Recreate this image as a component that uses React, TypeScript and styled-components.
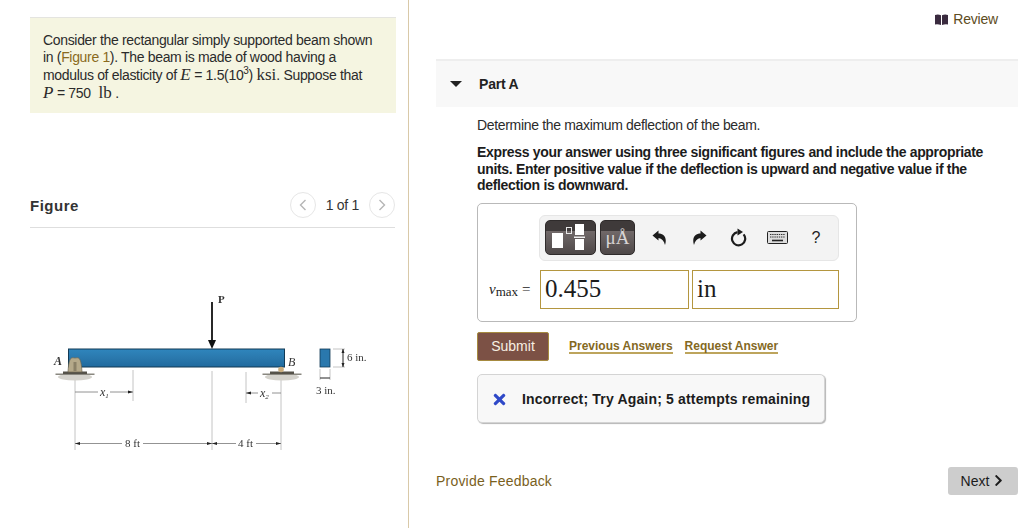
import React from 'react';
import styled, { createGlobalStyle } from 'styled-components';
import { FaChevronRight, FaTimes } from 'react-icons/fa';

const GlobalStyle = createGlobalStyle`
  html, body {
    margin: 0;
    padding: 0;
    background: #fff;
    font-family: "Liberation Sans", Arial, sans-serif;
    font-size: 14px;
    color: #222;
  }
`;

const Page = styled.div`
  display: flex;
  width: 1024px;
  height: 528px;
  overflow: hidden;
`;

const LeftColumn = styled.div`
  width: 409px;
  height: 528px;
  box-sizing: border-box;
  flex: none;
  padding: 17px 12px 0 30px;
  border-right: 1px solid #d9c9a8;
`;

const ProblemBox = styled.div`
  height: 96px;
  box-sizing: border-box;
  padding: 14px 13px 0;
  background: #f5f5e1;
  border-top: 1px solid #e4e4e0;
  line-height: 17px;
  letter-spacing: -0.33px;
  color: #2b2b2b;
`;

const Sup = styled.sup`
  font-size: 10px;
  line-height: 0;
`;

const MathText = styled.span<{ $italic?: boolean }>`
  font-family: "Liberation Serif", "Times New Roman", serif;
  font-size: 17px;
  letter-spacing: 0;
  font-style: ${(p) => (p.$italic ? 'italic' : 'normal')};
`;

const InlineLink = styled.span`
  color: #8a6a1d;
`;

const FigureHeader = styled.div`
  display: flex;
  align-items: center;
  justify-content: space-between;
  height: 26px;
  margin-top: 79px;
  margin-right: 1px;
  padding-bottom: 9px;
  border-bottom: 1px solid #dedede;
`;

const FigureTitle = styled.span`
  font-size: 15px;
  font-weight: bold;
  letter-spacing: 0.5px;
  color: #333;
`;

const Pager = styled.div`
  display: flex;
  align-items: center;
  gap: 10px;
  letter-spacing: -0.3px;
  color: #333;
`;

const PagerButton = styled.span`
  display: flex;
  align-items: center;
  justify-content: center;
  width: 26px;
  height: 26px;
  box-sizing: border-box;
  border: 1px solid #e6e6e6;
  border-radius: 50%;
`;

const Diagram = styled.svg`
  display: block;
  margin: 62px 0 0 10px;
  filter: blur(0.4px);
`;

const RightColumn = styled.div`
  flex: 1;
  display: flex;
  flex-direction: column;
  padding: 0 6px 0 27px;
`;

const ReviewRow = styled.div`
  display: flex;
  align-items: center;
  justify-content: flex-end;
  gap: 5px;
  height: 38px;
  margin: 0 20px 21px 0;
  letter-spacing: -0.2px;
  color: #5d4c22;
`;

const PartBar = styled.div`
  display: flex;
  align-items: center;
  height: 48px;
  box-sizing: border-box;
  padding-left: 14px;
  gap: 17px;
  background: #f8f8f8;
  border-top: 2px solid #eeeeee;
  font-weight: bold;
  letter-spacing: -0.2px;
  color: #222;
`;

const Caret = styled.span`
  width: 0;
  height: 0;
  border-left: 6px solid transparent;
  border-right: 6px solid transparent;
  border-top: 6px solid #222;
`;

const PartBody = styled.div`
  padding-left: 41px;
`;

const Prompt = styled.p`
  margin: 10px 0 0;
  line-height: 17px;
  letter-spacing: -0.33px;
  color: #2b2b2b;
`;

const Instructions = styled.p`
  margin: 10px 0 0;
  width: 510px;
  line-height: 16.5px;
  font-weight: bold;
  letter-spacing: -0.33px;
  color: #1c1c1c;
`;

const AnswerBox = styled.div`
  display: grid;
  grid-template-columns: 50px 300px;
  row-gap: 9px;
  align-items: center;
  align-content: start;
  width: 380px;
  height: 119px;
  box-sizing: border-box;
  margin-top: 9px;
  padding: 11px 0 0 11px;
  border: 1px solid #b9b9b9;
  border-radius: 5px;
`;

const Toolbar = styled.div`
  grid-column: 2;
  display: flex;
  align-items: center;
  width: 300px;
  height: 46px;
  box-sizing: border-box;
  padding-left: 5px;
  background: #f3f3f3;
  border: 1px solid #e6e6e6;
  border-radius: 6px;
`;

const TemplateButton = styled.div<{ $width: number }>`
  display: flex;
  align-items: center;
  justify-content: center;
  width: ${(p) => p.$width}px;
  height: 35px;
  margin-right: 4px;
  border-radius: 5px;
  background: linear-gradient(#3f3a3a 0 30%, #716969 30%, #4e4848 100%);
  border: 1px solid #2f2b2b;
  box-sizing: border-box;
  color: #d8d4d4;
  font-family: "Liberation Serif", serif;
  font-size: 19px;
`;

const ToolIcon = styled.span<{ $width: number }>`
  display: flex;
  align-items: center;
  justify-content: center;
  width: ${(p) => p.$width}px;
  color: #222;
  font-size: 16px;
`;

const Label = styled.span`
  font-family: "Liberation Serif", serif;
  font-size: 15px;
  color: #222;
  white-space: nowrap;
`;

const LabelSub = styled.span`
  font-size: 13px;
  position: relative;
  top: 2px;
  margin-right: 4px;
`;

const InputRow = styled.div`
  display: flex;
  gap: 3px;
  margin-left: 1px;
`;

const InputCell = styled.div<{ $width: number }>`
  width: ${(p) => p.$width}px;
  height: 39px;
  box-sizing: border-box;
  padding-left: 4px;
  border: 1px solid #b4963f;
  font-family: "Liberation Serif", serif;
  font-size: 25px;
  line-height: 36px;
  color: #1c1c1c;
`;

const ActionRow = styled.div`
  display: flex;
  align-items: center;
  margin-top: 10px;
`;

const SubmitButton = styled.div`
  display: flex;
  align-items: center;
  justify-content: center;
  width: 72px;
  height: 29px;
  box-sizing: border-box;
  background: #7c5145;
  border: 1px solid #a68a3f;
  border-radius: 2px;
  color: #f7efe2;
  margin-right: 20px;
`;

const ActionLink = styled.span`
  margin: 2px 12px 0 0;
  font-size: 12px;
  font-weight: bold;
  color: #84691f;
  border-bottom: 2px solid #bda45c;
  line-height: 12px;
`;

const FeedbackBox = styled.div`
  display: flex;
  align-items: center;
  gap: 14px;
  width: 348px;
  height: 49px;
  box-sizing: border-box;
  margin-top: 13px;
  padding: 2px 0 0 13px;
  background: #f8f8f8;
  border: 1px solid #d4d4d4;
  border-radius: 5px;
  box-shadow: 1px 1px 1px #b5b5b5;
  font-weight: bold;
  color: #1c1c1c;
  font-size: 14px;
  letter-spacing: 0.17px;
`;

const FooterRow = styled.div`
  display: flex;
  align-items: center;
  justify-content: space-between;
  margin-top: 44px;
`;

const FooterLink = styled.span`
  color: #7a5f1d;
  letter-spacing: 0.2px;
`;

const NextButton = styled.div`
  display: flex;
  align-items: center;
  justify-content: center;
  gap: 3px;
  width: 70px;
  height: 28px;
  background: #cdcdcd;
  border-radius: 3px;
  color: #1c1c1c;
`;

const BookIcon = () => (
  <svg width="13" height="11" viewBox="0 0 13 11">
    <path d="M0 1 Q3 0 6 1.2 V11 Q3 9.8 0 10.4 Z M7 1.2 Q10 0 13 1 V10.4 Q10 9.8 7 11 Z" fill="#3a2b3f" />
  </svg>
);

const ChevronGlyph = ({ back }: { back?: boolean }) => (
  <svg width="8" height="12" viewBox="0 0 8 12">
    <path d={back ? 'M6.5 1 L1.5 6 L6.5 11' : 'M1.5 1 L6.5 6 L1.5 11'} fill="none" stroke="#b5b5b5" strokeWidth="1.4" />
  </svg>
);

const FractionGlyph = () => (
  <svg width="49" height="33" viewBox="1 1 49 33">
    <rect x="7" y="13" width="11" height="15" fill="#fff" />
    <rect x="21.5" y="7.5" width="5" height="6" fill="none" stroke="#e8e8e8" strokeWidth="1" />
    <rect x="30" y="4" width="9" height="11" fill="#fff" />
    <rect x="29" y="16.5" width="11" height="1.5" fill="#eee" />
    <rect x="30" y="19" width="9" height="11" fill="#fff" />
  </svg>
);

const ArrowGlyph = ({ flip }: { flip?: boolean }) => (
  <svg width="15" height="16" viewBox="0 0 15 16">
    <path
      transform={flip ? 'translate(15 0) scale(-1 1)' : undefined}
      d="M0.5 5.5 L6.5 0.5 V3.5 C11.5 3.5 15.5 7.5 13 15 C12 11 10 8.5 6.5 8 V10.5 Z"
      fill="#1c1c1c"
    />
  </svg>
);

const ResetGlyph = () => (
  <svg width="17" height="19" viewBox="0 0 17 19">
    <path d="M7.5 4.2 A6.6 6.6 0 1 0 13.6 6.4" fill="none" stroke="#1c1c1c" strokeWidth="2.2" />
    <path d="M7.5 0.5 L13 4 L7.5 7.5 Z" fill="#1c1c1c" />
  </svg>
);

const KeyboardGlyph = () => (
  <svg width="21" height="13" viewBox="0 0 21 13">
    <rect x="0.5" y="0.5" width="20" height="12" rx="1" fill="#ddd" stroke="#222" />
    <path d="M3 3.5h15M3 6h15" stroke="#333" strokeWidth="1.2" strokeDasharray="1.4 0.8" />
    <path d="M5 9.5h11" stroke="#222" strokeWidth="1.6" />
  </svg>
);

const Support = ({ x }: { x: number }) => (
  <g>
    <ellipse cx={x} cy={377} rx={17} ry={3.5} fill="#d4d2cc" />
    <rect x={x - 19.5} y={373.5} width={39} height={1.5} fill="#8a8880" />
    <rect x={x - 12} y={371.5} width={24} height={2.5} fill="#55524a" />
  </g>
);

const BeamDiagram = () => (
  <Diagram width="340" height="170" viewBox="40 290 340 170">
    <defs>
      <linearGradient id="wood" x1="0" y1="0" x2="0" y2="1">
        <stop offset="0" stopColor="#2f86bd" />
        <stop offset="0.5" stopColor="#2a78ad" />
        <stop offset="1" stopColor="#1f6a9e" />
      </linearGradient>
    </defs>
    <g stroke="#c4c4c4" strokeWidth="1" fill="none">
      <path d="M75 376V450M133 370V401M212 371V450M246 372V403M281 376V450" />
      <path d="M333 349H345M333 367H345M320 369V380M330 369V380" />
    </g>
    <g stroke="#777" strokeWidth="0.8" fill="none">
      <path d="M75 392H98M110 392H133M246 393H258M272 393H281" />
      <path d="M75 443.5H122M143 443.5H212M212 443.5H236M256 443.5H281" />
    </g>
    <g stroke="#222" strokeWidth="1" fill="none">
      <path d="M343 349V367M320 378H330" />
    </g>
    <g fill="#222">
      <path d="M133 392l-5-1.5v3zM246 393l5-1.5v3zM75 443.5l5-1.5v3zM212 443.5l-5-1.5v3zM212 443.5l5-1.5v3zM281 443.5l-5-1.5v3zM343 349l-1.5 4h3zM343 367l-1.5-4h3z" />
    </g>
    <rect x="68.5" y="349" width="216" height="18" fill="url(#wood)" stroke="#123a55" strokeWidth="1" />
    <rect x="320" y="349" width="10" height="18" fill="#2a78ad" stroke="#123a55" strokeWidth="0.8" />
    <path d="M212 302V344" stroke="#111" strokeWidth="1.8" />
    <path d="M208 340H216L212 349Z" fill="#111" />
    <Support x={75} />
    <Support x={282} />
    <path d="M68 372 C69 355 72 358 75 358 C78 358 81 355 82 372Z" fill="#b5a98a" stroke="#6d6550" strokeWidth="0.7" />
    <rect x="73.5" y="362" width="3" height="9" fill="#8b8168" />
    <circle cx="281" cy="369.5" r="2.8" fill="#c9ad7e" />
    <g fontFamily='"Liberation Serif", serif' fontSize="11" fill="#333">
      <text x="218" y="303" fontWeight="bold">P</text>
      <text x="54" y="365" fontStyle="italic" fontWeight="bold" fontSize="12">A</text>
      <text x="288" y="366" fontStyle="italic" fontSize="12">B</text>
      <text x="100" y="396" fontStyle="italic" fontSize="12">x<tspan fontSize="7" dy="2">1</tspan></text>
      <text x="260" y="397" fontStyle="italic" fontSize="12">x<tspan fontSize="7" dy="2">2</tspan></text>
      <text x="125" y="447">8 ft</text>
      <text x="238" y="447">4 ft</text>
      <text x="347" y="361">6 in.</text>
      <text x="316" y="394">3 in.</text>
    </g>
  </Diagram>
);

export default function App() {
  return (
    <Page>
      <GlobalStyle />
      <LeftColumn>
        <ProblemBox>
          Consider the rectangular simply supported beam shown
          <br />
          in (<InlineLink>Figure 1</InlineLink>). The beam is made of wood having a
          <br />
          modulus of elasticity of <MathText $italic>E</MathText> = 1.5(10<Sup>3</Sup>) <MathText>ksi</MathText>. Suppose that
          <br />
          <MathText $italic>P</MathText> = 750 <MathText>&nbsp;lb</MathText> .
        </ProblemBox>
        <FigureHeader>
          <FigureTitle>Figure</FigureTitle>
          <Pager>
            <PagerButton>
              <ChevronGlyph back />
            </PagerButton>
            <span>1 of 1</span>
            <PagerButton>
              <ChevronGlyph />
            </PagerButton>
          </Pager>
        </FigureHeader>
        <BeamDiagram />
      </LeftColumn>
      <RightColumn>
        <ReviewRow>
          <BookIcon />
          <span>Review</span>
        </ReviewRow>
        <PartBar>
          <Caret />
          <span>Part A</span>
        </PartBar>
        <PartBody>
          <Prompt>Determine the maximum deflection of the beam.</Prompt>
          <Instructions>
            Express your answer using three significant figures and include the appropriate units. Enter positive value if the deflection is upward and negative value if the deflection is downward.
          </Instructions>
          <AnswerBox>
            <Toolbar>
              <TemplateButton $width={51}>
                <FractionGlyph />
              </TemplateButton>
              <TemplateButton $width={35}>μÅ</TemplateButton>
              <ToolIcon $width={40}>
                <ArrowGlyph />
              </ToolIcon>
              <ToolIcon $width={40}>
                <ArrowGlyph flip />
              </ToolIcon>
              <ToolIcon $width={38}>
                <ResetGlyph />
              </ToolIcon>
              <ToolIcon $width={40}>
                <KeyboardGlyph />
              </ToolIcon>
              <ToolIcon $width={38}>?</ToolIcon>
            </Toolbar>
            <Label>
              <i>v</i>
              <LabelSub>max</LabelSub>=
            </Label>
            <InputRow>
              <InputCell $width={149}>0.455</InputCell>
              <InputCell $width={147}>in</InputCell>
            </InputRow>
          </AnswerBox>
          <ActionRow>
            <SubmitButton>Submit</SubmitButton>
            <ActionLink>Previous Answers</ActionLink>
            <ActionLink>Request Answer</ActionLink>
          </ActionRow>
          <FeedbackBox>
            <FaTimes size={17} color="#2f49c8" />
            <span>Incorrect; Try Again; 5 attempts remaining</span>
          </FeedbackBox>
        </PartBody>
        <FooterRow>
          <FooterLink>Provide Feedback</FooterLink>
          <NextButton>
            Next <FaChevronRight size={13} />
          </NextButton>
        </FooterRow>
      </RightColumn>
    </Page>
  );
}
